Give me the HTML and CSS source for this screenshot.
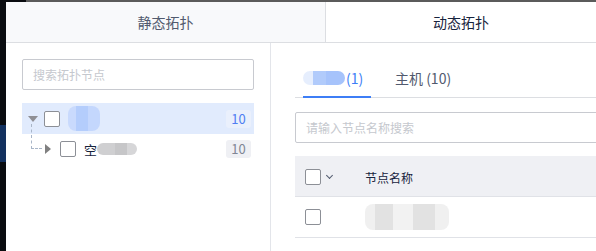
FILE: index.html
```html
<!DOCTYPE html>
<html lang="zh-CN">
<head>
    <meta charset="UTF-8">
    <meta name="viewport" content="width=device-width, initial-scale=1.0">
    <title>拓扑</title>
    <link rel="stylesheet" href="styles.css">
</head>
<body>
    <div class="backdrop-top"></div>
    <div class="stage">
        <div class="backdrop-side"><span class="side-mark"></span></div>
        <div class="modal">
            <div class="modal-tabs">
                <div class="modal-tab">静态拓扑</div>
                <div class="modal-tab active">动态拓扑</div>
            </div>
            <div class="modal-body">
                <div class="tree-panel">
                    <div class="search">搜索拓扑节点</div>
                    <div class="tree">
                        <div class="tree-row selected">
                            <span class="caret down"></span>
                            <span class="checkbox"></span>
                            <span class="masked blue"></span>
                            <span class="count">10</span>
                        </div>
                        <div class="tree-row child">
                            <span class="connector"></span>
                            <span class="caret right"></span>
                            <span class="checkbox"></span>
                            <span class="label">空</span><span class="masked gray"></span>
                            <span class="count">10</span>
                        </div>
                    </div>
                </div>
                <div class="list-panel">
                    <div class="sub-tabs">
                        <div class="sub-tab active"><span class="masked light"></span>(1)</div>
                        <div class="sub-tab">主机 (10)</div>
                    </div>
                    <div class="search wide">请输入节点名称搜索</div>
                    <div class="table">
                        <div class="table-row head">
                            <span class="cell-check"><span class="checkbox"></span><span class="chevron"></span></span>
                            <span class="cell-name">节点名称</span>
                        </div>
                        <div class="table-row">
                            <span class="cell-check"><span class="checkbox"></span></span>
                            <span class="cell-name"><span class="masked pale"></span></span>
                        </div>
                    </div>
                </div>
            </div>
        </div>
    </div>
</body>
</html>
```
FILE: styles.css
```css
body {
    margin: 0;
    background: #0a0c10;
    font-family: "Noto Sans CJK SC", "Noto Sans", sans-serif;
    font-size: 12px;
    color: #515a6e;
    overflow: hidden;
}
.backdrop-top {
    height: 2px;
    background: linear-gradient(to right, #0a0c10 26px, #5b5b5b 26px);
}
.stage {
    display: flex;
    height: 249px;
}
.backdrop-side {
    width: 6px;
    flex: none;
    padding-top: 123px;
}
.side-mark {
    display: block;
    height: 37px;
    background: #13315f;
}
.modal {
    flex: 1;
    background: #fff;
    display: flex;
    flex-direction: column;
}
.modal-tabs {
    display: grid;
    grid-template-columns: 320px 1fr;
    height: 40px;
    border-bottom: 1px solid #dcdee2;
}
.modal-tab {
    display: flex;
    align-items: center;
    justify-content: center;
    font-size: 14px;
    color: #515a6e;
    background: #f8f9fb;
    border-right: 1px solid #dcdee2;
}
.modal-tab.active {
    background: #fff;
    border-right: none;
    color: #17233d;
}
.modal-body {
    flex: 1;
    display: flex;
}
.tree-panel {
    width: 232px;
    padding: 16px 16px 0;
    border-right: 1px solid #e3e5ea;
}
.search {
    height: 29px;
    border: 1px solid #c8cad0;
    border-radius: 2px;
    padding-left: 10px;
    line-height: 29px;
    color: #c5c8ce;
}
.tree {
    margin-top: 13px;
}
.tree-row {
    position: relative;
    display: flex;
    align-items: center;
    height: 31px;
    padding-left: 6px;
}
.tree-row.selected {
    background: #e1ebfd;
}
.tree-row.child {
    height: 18px;
    margin-top: 6px;
    padding-left: 23px;
}
.caret {
    width: 0;
    height: 0;
    border-style: solid;
    flex: none;
}
.caret.down {
    border-width: 6px 5px 0;
    border-color: #8f8f95 transparent transparent;
    margin-right: 6px;
}
.caret.right {
    border-width: 5px 0 5px 6px;
    border-color: transparent transparent transparent #808080;
    margin-right: 9px;
}
.connector {
    position: absolute;
    left: 9px;
    top: -16px;
    width: 10px;
    height: 24px;
    border-left: 1px dashed #a9b6c8;
    border-bottom: 1px dashed #a9b6c8;
}
.checkbox {
    display: inline-block;
    width: 14px;
    height: 14px;
    border: 1px solid #8c8f96;
    border-radius: 2px;
    background: #fff;
    flex: none;
}
.tree-row .checkbox {
    margin-right: 8px;
}
.label {
    font-size: 13px;
    color: #17233d;
}
.masked {
    display: inline-block;
    border-radius: 8px;
}
.masked.blue {
    width: 32px;
    height: 25px;
    background: linear-gradient(to right, #c9dafd 0 8px, #b4cdfc 8px 20px, #c4d7fd 20px);
}
.masked.gray {
    width: 40px;
    height: 12px;
    background: linear-gradient(to right, #cfcfd1 0 18px, #c6c6c8 18px 30px, #d6d6d8 30px);
}
.masked.light {
    width: 42px;
    height: 14px;
    margin-right: 1px;
    background: linear-gradient(to right, #e6eefd 0 10px, #b1cbfb 10px 23px, #a6c3fb 23px);
}
.masked.pale {
    width: 84px;
    height: 26px;
    background: linear-gradient(to right, #f0f0f0 0 10px, #e2e2e2 10px 28px, #f2f2f2 28px 48px, #e2e2e2 48px 70px, #f0f0f0 70px);
}
.count {
    margin-left: auto;
    margin-right: 3px;
    width: 25px;
    height: 18px;
    line-height: 18px;
    text-align: center;
    border-radius: 3px;
    background: #eff0f4;
    font-size: 13px;
    color: #808695;
}
.selected .count {
    background: #eaf0fc;
    color: #4f7ef2;
}
.list-panel {
    flex: 1;
    padding: 16px 0 0 24px;
    min-width: 0;
}
.sub-tabs {
    display: flex;
    height: 38px;
    padding-left: 8px;
    border-bottom: 1px solid #dcdee2;
}
.sub-tab {
    display: flex;
    align-items: center;
    margin-right: 16px;
    font-size: 14px;
    color: #515a6e;
    margin-bottom: -1px;
    border-bottom: 2px solid transparent;
}
.sub-tab.active {
    color: #3d7ef6;
    border-bottom-color: #3d7ef6;
    width: 68px;
    margin-right: 24px;
}
.search.wide {
    margin-top: 14px;
    margin-right: -20px;
}
.table {
    margin-top: 13px;
}
.table-row {
    display: flex;
    align-items: center;
    height: 40px;
    border-bottom: 1px solid #e0e2e7;
}
.table-row.head {
    background: #eff0f4;
    color: #17233d;
    font-size: 12px;
    padding-top: 2px;
    height: 38px;
}
.cell-check {
    width: 60px;
    padding-left: 10px;
    display: flex;
    align-items: center;
}
.chevron {
    width: 4px;
    height: 4px;
    border-right: 1px solid #515a6e;
    border-bottom: 1px solid #515a6e;
    transform: rotate(45deg);
    margin: -3px 0 0 6px;
}
.cell-name {
    display: flex;
    align-items: center;
}
```
